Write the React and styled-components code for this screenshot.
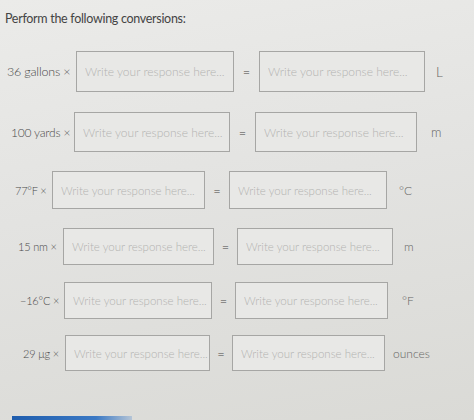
import React from 'react';
import styled, { createGlobalStyle } from 'styled-components';

const GlobalStyle = createGlobalStyle`
  html, body {
    margin: 0;
    padding: 0;
    height: 100%;
  }
  body {
    font-family: Lato, "Open Sans", sans-serif;
    background: #e2e2e0;
  }
`;

const Page = styled.div`
  width: 474px;
  height: 420px;
  overflow: hidden;
  display: flex;
  flex-direction: column;
  background: linear-gradient(170deg, #ebebe9 0%, #e3e3e1 45%, #dadad6 100%);
`;

const Title = styled.h1`
  margin: 11px 0 0 5px;
  font-size: 12.5px;
  line-height: 16px;
  font-weight: 400;
  color: #444;
  letter-spacing: -0.3px;
`;

const Row = styled.div`
  display: flex;
  align-items: center;
  margin-top: ${p => p.top}px;
  padding-left: ${p => p.indent}px;
  height: ${p => p.h}px;
`;

const Label = styled.span`
  width: ${p => p.w}px;
  flex-shrink: 0;
  font-size: ${p => p.size}px;
  font-weight: 300;
  color: #4a4a4a;
  white-space: nowrap;
  letter-spacing: -0.2px;
`;

const Field = styled.input`
  box-sizing: border-box;
  width: ${p => p.w}px;
  height: 100%;
  flex-shrink: 0;
  margin: 0;
  padding: 0 0 0 8px;
  border: 1px solid #a6a6a4;
  border-radius: 0;
  background: #e8e8e6;
  font-family: Lato, "Open Sans", sans-serif;
  font-size: ${p => p.size}px;
  font-weight: 300;
  color: #444;
  outline: none;

  &::placeholder {
    color: #b3b3b1;
  }
`;

const Eq = styled.span`
  width: ${p => p.w}px;
  flex-shrink: 0;
  text-align: center;
  font-size: 12px;
  color: #8a8a88;
`;

const Unit = styled.span`
  margin-left: ${p => p.gap}px;
  font-size: ${p => p.size}px;
  font-weight: 300;
  color: #666664;
  white-space: nowrap;
`;

const BlueBar = styled.div`
  margin: auto 0 0 12px;
  width: 120px;
  height: 4px;
  background: linear-gradient(90deg, #1f5dad 0%, #3b79c4 70%, rgba(120, 160, 210, 0.4) 100%);
`;

const rows = [
  { label: '36 gallons ×', unit: 'L', indent: 7, labelW: 69, top: 24, h: 41, w1: 158, eq: 25, w2: 166, gap: 11, size: 12.5, ph: 12 },
  { label: '100 yards ×', unit: 'm', indent: 11, labelW: 63, top: 20, h: 40, w1: 156, eq: 25, w2: 162, gap: 14, size: 12, ph: 12 },
  { label: '77°F ×', unit: '°C', indent: 15, labelW: 37, top: 19, h: 38, w1: 153, eq: 24, w2: 158, gap: 12, size: 11, ph: 11.5 },
  { label: '15 nm ×', unit: 'm', indent: 18, labelW: 45, top: 19, h: 37, w1: 151, eq: 23, w2: 156, gap: 11, size: 11, ph: 11.5 },
  { label: '−16°C ×', unit: '°F', indent: 20, labelW: 44, top: 17, h: 37, w1: 148, eq: 23, w2: 153, gap: 14, size: 11, ph: 11.5 },
  { label: '29 μg ×', unit: 'ounces', indent: 23, labelW: 42, top: 16, h: 36, w1: 145, eq: 22, w2: 153, gap: 8, size: 11, ph: 11.5 },
];

export default function App() {
  return (
    <Page>
      <GlobalStyle />
      <Title>Perform the following conversions:</Title>
      {rows.map(r => (
        <Row key={r.label} top={r.top} indent={r.indent} h={r.h}>
          <Label w={r.labelW} size={r.size}>{r.label}</Label>
          <Field w={r.w1} size={r.ph} placeholder="Write your response here..." />
          <Eq w={r.eq}>=</Eq>
          <Field w={r.w2} size={r.ph} placeholder="Write your response here..." />
          <Unit gap={r.gap} size={r.size + 1}>{r.unit}</Unit>
        </Row>
      ))}
      <BlueBar />
    </Page>
  );
}
